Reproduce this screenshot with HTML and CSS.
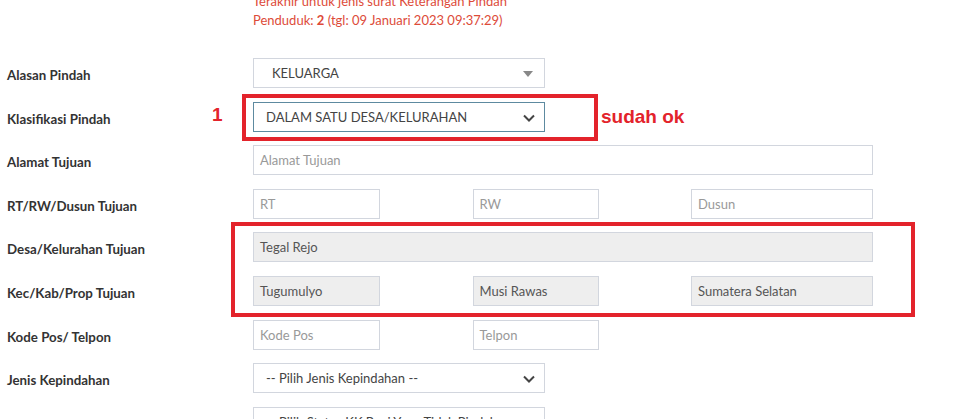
FILE: index.html
```html
<!DOCTYPE html>
<html lang="id">
<head>
<meta charset="utf-8">
<title>Surat Keterangan Pindah</title>
<link rel="stylesheet" href="styles.css">
</head>
<body>
<div class="page">
  <p class="note">Terakhir untuk jenis surat Keterangan Pindah<br>Penduduk: <b>2</b> (tgl: 09 Januari 2023 09:37:29)</p>

  <div class="row">
    <div class="label">Alasan Pindah</div>
    <div class="box select s2">KELUARGA
      <svg class="caret" width="10" height="6" viewBox="0 0 10 6"><path d="M0 0H10L5 6Z" fill="#888"/></svg>
    </div>
  </div>

  <div class="row">
    <div class="label">Klasifikasi Pindah</div>
    <div class="box select focus">DALAM SATU DESA/KELURAHAN
      <svg class="chev" width="12" height="8" viewBox="0 0 12 8"><path d="M1 1.5L6 6.5L11 1.5" fill="none" stroke="#444" stroke-width="2"/></svg>
    </div>
  </div>

  <div class="row">
    <div class="label">Alamat Tujuan</div>
    <div class="box wide ph">Alamat Tujuan</div>
  </div>

  <div class="row">
    <div class="label">RT/RW/Dusun Tujuan</div>
    <div class="triple">
      <div class="box ph">RT</div>
      <div class="box ph">RW</div>
      <div class="box ph">Dusun</div>
    </div>
  </div>

  <div class="row">
    <div class="label">Desa/Kelurahan Tujuan</div>
    <div class="box wide ro">Tegal Rejo</div>
  </div>

  <div class="row">
    <div class="label">Kec/Kab/Prop Tujuan</div>
    <div class="triple">
      <div class="box ro">Tugumulyo</div>
      <div class="box ro">Musi Rawas</div>
      <div class="box ro">Sumatera Selatan</div>
    </div>
  </div>

  <div class="row">
    <div class="label">Kode Pos/ Telpon</div>
    <div class="triple">
      <div class="box ph">Kode Pos</div>
      <div class="box ph">Telpon</div>
    </div>
  </div>

  <div class="row">
    <div class="label">Jenis Kepindahan</div>
    <div class="box select">-- Pilih Jenis Kepindahan --
      <svg class="chev" width="12" height="8" viewBox="0 0 12 8"><path d="M1 1.5L6 6.5L11 1.5" fill="none" stroke="#444" stroke-width="2"/></svg>
    </div>
  </div>

  <div class="row">
    <div class="label"></div>
    <div class="box select">-- Pilih Status KK Bagi Yang Tidak Pindah --</div>
  </div>

  <div class="mark mark-1"></div>
  <div class="mark mark-2"></div>
  <span class="anno anno-num">1</span>
  <span class="anno anno-ok">sudah ok</span>
</div>
</body>
</html>
```

FILE: styles.css
```css
html, body {
  margin: 0;
  padding: 0;
  background: #fff;
  overflow: hidden;
}
body {
  font-family: "Lato", "Open Sans", sans-serif;
  font-size: 13px;
  color: #333;
}
.page {
  position: relative;
  padding-left: 7px;
  height: 419px;
  overflow: hidden;
}
.note {
  margin: -8px 0 28px 246px;
  color: #dd4b39;
  font-size: 13px;
  line-height: 19px;
}
.note b {
  font-weight: 700;
}
.row {
  display: flex;
  align-items: flex-start;
  margin-bottom: 13.6px;
}
.label {
  width: 246px;
  flex: none;
  font-weight: 700;
  font-size: 13.3px;
  color: #333;
  line-height: 34px;
  height: 30px;
}
.box {
  box-sizing: border-box;
  height: 30px;
  border: 1px solid #d2d6de;
  padding: 0 6px;
  line-height: 28px;
  color: #555;
  background: #fff;
  white-space: nowrap;
  overflow: hidden;
}
.wide {
  width: 620px;
}
.ph {
  color: #999;
}
.ro {
  background: #eee;
  color: #555;
}
.select {
  position: relative;
  width: 292px;
  padding-left: 12px;
  color: #444;
}
.select.s2 {
  padding-left: 18px;
}
.select.focus {
  border-color: #5d8aa0;
}
.caret {
  position: absolute;
  right: 11px;
  top: 12px;
}
.chev {
  position: absolute;
  right: 9px;
  top: 11px;
}
.triple {
  display: grid;
  width: 620px;
  grid-template-columns: 127px 126px 182px;
  justify-content: space-between;
}
.mark {
  position: absolute;
  border: 4px solid #e3232b;
  box-sizing: border-box;
}
.mark-1 {
  left: 242px;
  top: 94px;
  width: 356px;
  height: 47px;
}
.mark-2 {
  left: 231px;
  top: 222px;
  width: 684px;
  height: 95px;
}
.anno {
  position: absolute;
  color: #e3232b;
  font-family: "Liberation Sans", Arial, sans-serif;
  font-weight: 700;
  font-size: 19px;
  line-height: 22px;
}
.anno-num {
  left: 212px;
  top: 104px;
}
.anno-ok {
  left: 601px;
  top: 106px;
}
```
